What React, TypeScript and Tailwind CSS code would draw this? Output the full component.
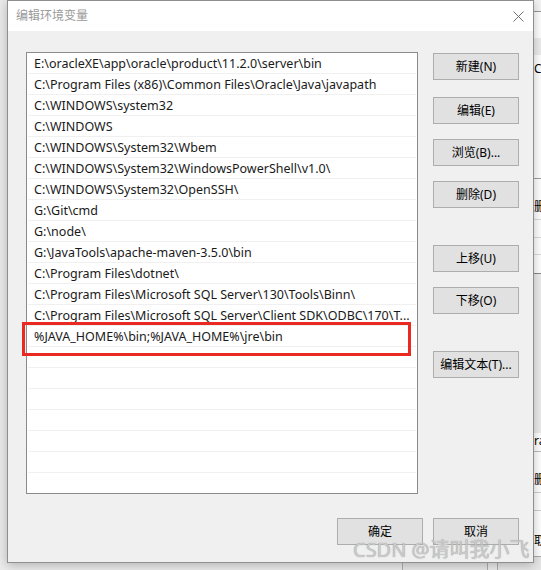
import React from "react";

const paths = [
  "E:\\oracleXE\\app\\oracle\\product\\11.2.0\\server\\bin",
  "C:\\Program Files (x86)\\Common Files\\Oracle\\Java\\javapath",
  "C:\\WINDOWS\\system32",
  "C:\\WINDOWS",
  "C:\\WINDOWS\\System32\\Wbem",
  "C:\\WINDOWS\\System32\\WindowsPowerShell\\v1.0\\",
  "C:\\WINDOWS\\System32\\OpenSSH\\",
  "G:\\Git\\cmd",
  "G:\\node\\",
  "G:\\JavaTools\\apache-maven-3.5.0\\bin",
  "C:\\Program Files\\dotnet\\",
  "C:\\Program Files\\Microsoft SQL Server\\130\\Tools\\Binn\\",
  "C:\\Program Files\\Microsoft SQL Server\\Client SDK\\ODBC\\170\\T...",
  "%JAVA_HOME%\\bin;%JAVA_HOME%\\jre\\bin",
];

const ROWS = 21;

function Btn({ label, className = "" }: { label: string; className?: string }) {
  return (
    <div
      className={`flex h-[27px] w-[86px] items-center justify-center border border-[#adadad] bg-[#e1e1e1] text-[12px] text-black ${className}`}
    >
      {label}
    </div>
  );
}

export default function App() {
  const rows = Array.from({ length: ROWS }, (_, i) => paths[i] ?? "");
  return (
    <div
      className="relative h-[570px] w-[541px] overflow-hidden bg-[#ebebeb]"
      style={{ fontFamily: "'Noto Sans', 'Noto Sans CJK SC', sans-serif" }}
    >
      {/* window behind the dialog, peeking out on the right */}
      <div className="absolute left-[533px] top-0 h-[570px] w-[20px] bg-white">
        <div className="h-[12px] bg-[#f4f4f4] border-b border-[#9a9a9a]" />
        <div className="h-[26px]" />
        <div className="h-[17px] bg-[#ededed]" />
        <div className="pl-[1px] pt-[6px] text-[12px] leading-[16px] text-black">C:</div>
        <div className="mt-[101px] border-t border-[#a0a0a0]" />
        <div className="pl-[1px] pt-[20px] text-[12px] leading-[16px] text-black">删</div>
        <div className="mt-[4px] border-t border-[#dcdcdc]" />
        <div className="mt-[17px] border-t border-[#dcdcdc]" />
        <div className="mt-[16px] border-t border-[#dcdcdc]" />
        <div className="mt-[18px] h-[160px] border-t border-[#8a8a8a] bg-[#ececec]" />
        <div className="pl-[1px] text-[12px] leading-[16px] text-black">ra</div>
        <div className="mt-[2px] border-t border-[#bdbdbd]" />
        <div className="pl-[1px] pt-[20px] text-[12px] leading-[16px] text-black">删</div>
        <div className="mt-[4px] border-t border-[#d0d0d0]" />
        <div className="mt-[17px] border-t border-[#d0d0d0]" />
        <div className="pl-[1px] pt-[22px] text-[12px] leading-[16px] text-black">取</div>
      </div>
      {/* buttons of the window behind, below the dialog */}
      <div className="absolute left-[402px] top-[556px] h-[20px] w-[86px] border border-[#adadad] bg-[#e6e6e6]" />
      <div className="absolute left-[497px] top-[556px] h-[20px] w-[86px] border border-[#adadad] bg-[#e6e6e6]" />

      {/* dialog window */}
      <div className="absolute left-[7px] top-0 flex h-[563px] w-[527px] flex-col border border-[#8f8f8f] bg-[#f0f0f0] shadow-[0_2px_10px_rgba(0,0,0,0.25)]">
        <div className="flex h-[30px] items-center justify-between bg-white pl-[8px] pr-[9px]">
          <span className="text-[12px] text-[#9a9a9a]">编辑环境变量</span>
          <svg width="11" height="11" viewBox="0 0 11 11" className="mt-[1px]">
            <path d="M0.5 0.5 L10.5 10.5 M10.5 0.5 L0.5 10.5" stroke="#707070" strokeWidth="1" />
          </svg>
        </div>

        <div className="flex flex-col pl-[18px] pr-[13px] pt-[21px]">
          <div className="flex">
            <div className="h-[442px] w-[392px] overflow-hidden border border-[#8a8a8f] bg-white">
              {rows.map((p, i) => (
                <div
                  key={i}
                  className="ml-[1px] mr-[1px] h-[21px] overflow-hidden whitespace-nowrap border-b border-[#f0f0f0] pl-[6px] text-[12.5px] leading-[21px] text-[#1a1a1a]"
                >
                  {p}
                </div>
              ))}
            </div>
            <div className="ml-[15px] flex flex-col">
              <Btn label="新建(N)" className="mt-[1px]" />
              <Btn label="编辑(E)" className="mt-[17px]" />
              <Btn label="浏览(B)..." className="mt-[15px]" />
              <Btn label="删除(D)" className="mt-[15px]" />
              <Btn label="上移(U)" className="mt-[37px]" />
              <Btn label="下移(O)" className="mt-[15px]" />
              <Btn label="编辑文本(T)..." className="mt-[37px]" />
            </div>
          </div>
          <div className="mt-[24px] flex justify-end gap-[10px] pr-[1px]">
            <Btn label="确定" />
            <Btn label="取消" />
          </div>
        </div>
      </div>

      {/* highlight around the JAVA_HOME entry */}
      <div className="absolute left-[22px] top-[322px] h-[34px] w-[389px] border-[3px] border-[#ea2a22]" />

      {/* watermark */}
      <div
        className="absolute left-[353px] top-[539px] whitespace-nowrap text-[20px] leading-[22px] text-[#cacaca]"
        style={{ textShadow: "0 0 1px rgba(110,110,110,0.7)" }}
      >
        CSDN @请叫我小飞
      </div>
    </div>
  );
}
